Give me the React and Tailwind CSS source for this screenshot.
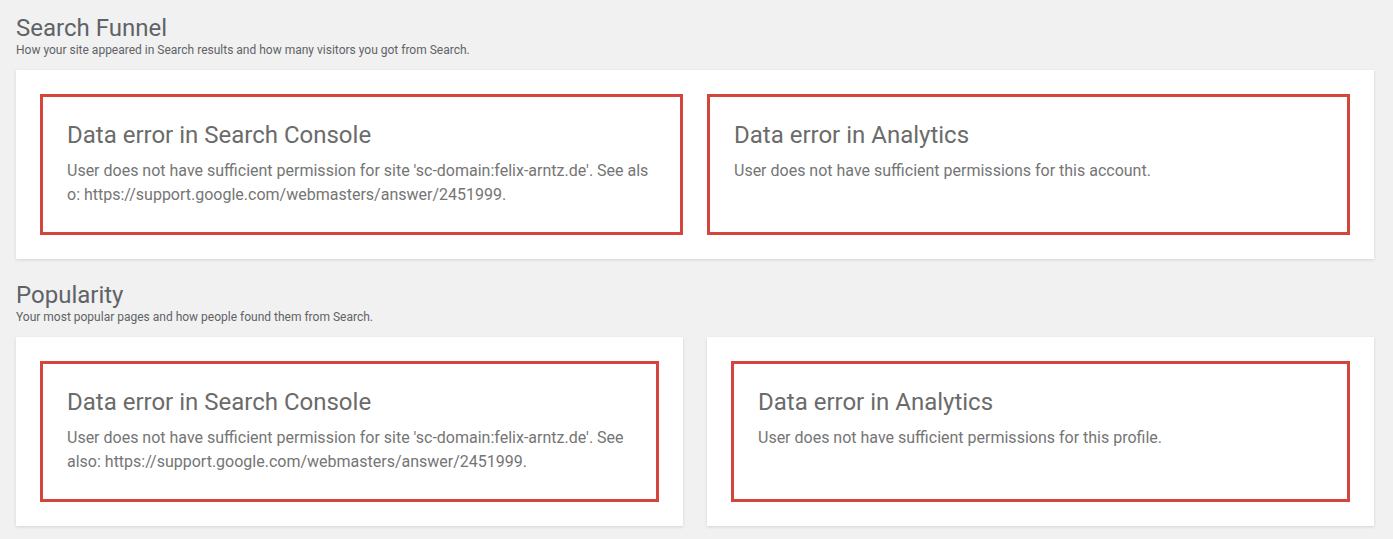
const ErrorBox = ({ title, children }) => (
  <div className="flex-1 border-[3px] border-[#d4453c] px-6 pt-[22px] pb-[25px]">
    <h3 className="text-[24px] leading-[32px] text-[#6b6b6b]">{title}</h3>
    <p className="mt-2 text-[16px] leading-[24px] text-[#757575] break-all">{children}</p>
  </div>
)

const Card = ({ className = '', children }) => (
  <div className={`bg-white p-6 shadow-[0_1px_3px_rgba(0,0,0,0.12)] ${className}`}>{children}</div>
)

const SectionHead = ({ title, subtitle }) => (
  <div className="mb-3">
    <h2 className="text-[24px] leading-[28px] text-[#5f6368]">{title}</h2>
    <p className="text-[12px] leading-[16px] text-[#5f6368]">{subtitle}</p>
  </div>
)

export default function App() {
  return (
    <div
      className="min-h-[539px] bg-[#f1f1f1] pl-4 pr-[19px] pt-[14px]"
      style={{ fontFamily: 'Roboto, "Noto Sans", sans-serif' }}
    >
      <section>
        <SectionHead
          title="Search Funnel"
          subtitle="How your site appeared in Search results and how many visitors you got from Search."
        />
        <Card className="grid grid-cols-2 gap-6">
          <ErrorBox title="Data error in Search Console">
            User does not have sufficient permission for site 'sc-domain:felix-arntz.de'. See also: https://support.google.com/webmasters/answer/2451999.
          </ErrorBox>
          <ErrorBox title="Data error in Analytics">
            User does not have sufficient permissions for this account.
          </ErrorBox>
        </Card>
      </section>

      <section className="mt-[22px]">
        <SectionHead
          title="Popularity"
          subtitle="Your most popular pages and how people found them from Search."
        />
        <div className="grid grid-cols-2 gap-6">
          <Card className="flex flex-col">
            <ErrorBox title="Data error in Search Console">
              User does not have sufficient permission for site 'sc-domain:felix-arntz.de'. See also: https://support.google.com/webmasters/answer/2451999.
            </ErrorBox>
          </Card>
          <Card className="flex flex-col">
            <ErrorBox title="Data error in Analytics">
              User does not have sufficient permissions for this profile.
            </ErrorBox>
          </Card>
        </div>
      </section>
    </div>
  )
}
